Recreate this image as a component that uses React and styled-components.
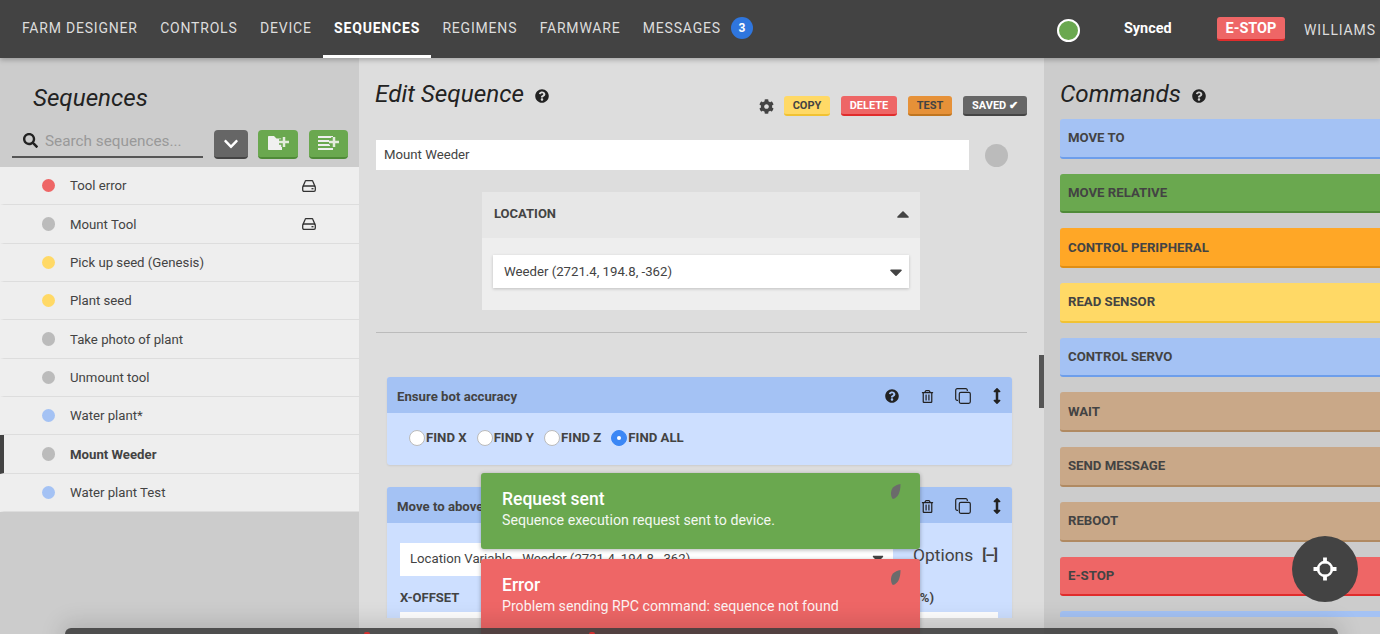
import React from "react";
import styled, { createGlobalStyle } from "styled-components";
import {
  FaSearch, FaChevronDown, FaQuestionCircle, FaRegTrashAlt, FaArrowsAltV, FaCog, FaCaretDown, FaCaretUp,
} from "react-icons/fa";

const Global = createGlobalStyle`
  html, body { margin: 0; padding: 0; width: 1380px; height: 634px; overflow: hidden; background: #ddd; }
  * { box-sizing: border-box; }
  body { font-family: Roboto, "Liberation Sans", sans-serif; color: #434343; }
`;

const Page = styled.div`
  position: relative;
  width: 1380px;
  height: 634px;
  overflow: hidden;
  display: flex;
  flex-direction: column;
`;

const Nav = styled.nav`
  height: 58px;
  flex: none;
  background: #434343;
  display: flex;
  align-items: stretch;
  padding-left: 10.8px;
  box-shadow: 0 2px 5px rgba(0, 0, 0, 0.25);
  position: relative;
  z-index: 2;
`;
const NavLink = styled.a`
  display: flex;
  align-items: center;
  gap: 10px;
  padding: 0 11.2px 0;
  font-size: 14px;
  letter-spacing: 0.8px;
  color: ${(p) => (p.$active ? "#fff" : "#ddd")};
  font-weight: ${(p) => (p.$active ? 700 : 400)};
  border-bottom: 3px solid ${(p) => (p.$active ? "#fff" : "transparent")};
`;
const Badge = styled.span`
  width: 22px;
  height: 22px;
  border-radius: 50%;
  background: #2f76de;
  color: #fff;
  font-size: 12px;
  font-weight: 700;
  letter-spacing: 0;
  display: flex;
  align-items: center;
  justify-content: center;
`;
const NavRight = styled.div`
  margin-left: auto;
  display: flex;
  align-items: center;
  width: 323px;
  flex: none;
`;
const StatusDot = styled.span`
  width: 23px;
  height: 23px;
  border-radius: 50%;
  background: #6aa84f;
  border: 2px solid #fff;
  flex: none;
  margin-top: 2px;
`;
const SyncText = styled.span`
  color: #fff;
  font-size: 14.4px;
  font-weight: 700;
  margin: 0 0 2px 44px;
  width: 93px;
`;
const EStop = styled.button`
  border: 0;
  border-bottom: 2px solid #e02c2c;
  border-radius: 3px;
  width: 68px;
  height: 24px;
  padding: 0;
  background: #ee6666;
  color: #fff;
  font: 700 14.5px Roboto, sans-serif;
`;
const User = styled.span`
  color: #ddd;
  font-size: 14px;
  letter-spacing: 0.87px;
  margin-left: 19px;
  white-space: nowrap;
  margin-top: 2px;
`;

const Columns = styled.div`
  flex: 1;
  min-height: 0;
  display: grid;
  grid-template-columns: 359px 685px 336px;
`;

const LeftCol = styled.aside`
  background: #ccc;
  display: flex;
  flex-direction: column;
`;
const LeftTitle = styled.h3`
  margin: 24px 0 0 33px;
  font: italic 400 24.2px/32px Roboto, sans-serif;
  color: #222;
`;
const SearchRow = styled.div`
  display: flex;
  align-items: flex-start;
  margin: 16px 0 0 12px;
  height: 37px;
`;
const SearchBox = styled.div`
  width: 191px;
  height: 28px;
  border-bottom: 2px solid #555;
  display: flex;
  align-items: center;
  gap: 7px;
  padding: 0 0 5px 11px;
  font-size: 15.3px;
  color: #999;
  margin-right: 11px;
  svg { color: #222; flex: none; }
`;
const IconBtn = styled.button`
  width: ${(p) => p.$w}px;
  height: 29px;
  border: 0;
  border-bottom: 2px solid ${(p) => p.$edge};
  border-radius: 4px;
  background: ${(p) => p.$bg};
  color: #fff;
  padding: 0;
  margin-right: ${(p) => p.$mr ?? 0}px;
  display: flex;
  align-items: center;
  justify-content: center;
`;
const SeqList = styled.ul`
  list-style: none;
  margin: 0;
  padding: 0;
`;
const SeqRow = styled.li`
  height: 38.35px;
  background: #eee;
  border-bottom: 1px solid #ddd;
  border-left: 4px solid ${(p) => (p.$active ? "#434343" : "transparent")};
  display: flex;
  align-items: center;
  padding-left: 37.500px;
  font-size: 13.2px;
  color: #434343;
  font-weight: ${(p) => (p.$active ? 700 : 400)};
`;
const SeqDot = styled.span`
  width: 13.500px;
  height: 13.500px;
  border-radius: 50%;
  background: ${(p) => p.$c};
  margin-right: 15px;
  flex: none;
`;
const SeqIcon = styled.svg`
  margin-left: auto;
  margin-right: 43px;
`;

const MidCol = styled.main`
  background: #ddd;
  position: relative;
`;
const MidScroll = styled.div`
  height: 560px;
  padding: 0 16px;
  overflow: hidden;
`;
const EditHead = styled.div`
  display: flex;
  align-items: flex-start;
  height: 82px;
`;
const MidTitle = styled.h3`
  margin: 20px 0 0 0;
  font: italic 400 24.3px/32px Roboto, sans-serif;
  color: #222;
  display: flex;
  align-items: center;
  gap: 11px;
  svg { margin-top: 4px; }
`;
const Actions = styled.div`
  margin-left: auto;
  margin-top: 38px;
  margin-right: 1px;
  display: flex;
  align-items: center;
  svg { color: #434343; margin-right: 10px; }
`;
const SmallBtn = styled.button`
  height: 20px;
  width: ${(p) => p.$w}px;
  margin-left: ${(p) => p.$ml ?? 0}px;
  border: 0;
  border-bottom: 2px solid ${(p) => p.$edge};
  border-radius: 3px;
  background: ${(p) => p.$bg};
  color: ${(p) => p.$fg};
  padding: 0;
  font: 700 11px Roboto, sans-serif;
`;
const NameRow = styled.div`
  display: flex;
  align-items: center;
  height: 30px;
`;
const NameInput = styled.div`
  width: 593px;
  height: 30px;
  background: #fff;
  padding-left: 8px;
  font-size: 13.2px;
  line-height: 29px;
  color: #434343;
  margin-left: 1px;
`;
const NameDot = styled.span`
  width: 23px;
  height: 23px;
  border-radius: 50%;
  background: #bbb;
  margin-left: 16px;
`;
const LocCard = styled.section`
  width: 438px;
  margin: 22px 0 0 107px;
  background: #eee;
`;
const LocHead = styled.div`
  height: 46px;
  background: #e7e7e7;
  display: flex;
  align-items: center;
  justify-content: space-between;
  padding: 0 7px 3px 12px;
  font-size: 13px;
  font-weight: 700;
  color: #434343;
`;
const LocBody = styled.div`
  height: 72px;
  padding: 17px 11px 0;
`;
const LocSelect = styled.div`
  height: 33px;
  background: #fff;
  box-shadow: 0 1px 3px rgba(0, 0, 0, 0.2);
  display: flex;
  align-items: center;
  justify-content: space-between;
  padding: 0 3px 0 11px;
  font-size: 13.2px;
`;
const Rule = styled.hr`
  margin: 22px 1px 0 1px;
  border: 0;
  border-top: 1px solid #bbb;
`;
const StepCard = styled.section`
  margin: ${(p) => p.$mt}px 16px 0 12px;
  background: #cddfff;
  border-radius: 3px;
  height: ${(p) => p.$h}px;
  box-shadow: 0 1px 2px rgba(0, 0, 0, 0.08);
`;
const StepHead = styled.div`
  height: 36px;
  background: #a4c2f4;
  border-radius: 3px 3px 0 0;
  display: flex;
  align-items: center;
  padding: 2px 7px 0 10px;
  font-size: 13.2px;
  font-weight: 700;
  color: #434343;
`;
const StepIcons = styled.div`
  margin-left: auto;
  display: flex;
  align-items: center;
  gap: 21.500px;
  color: #222;
`;
const MoveIcon = styled(FaArrowsAltV)`
  margin-left: -3.500px;
`;
const RadioRow = styled.div`
  display: flex;
  align-items: center;
  padding: 16px 0 0 22px;
  gap: 10px;
`;
const RadioItem = styled.label`
  display: flex;
  align-items: center;
  font-size: 13.2px;
  font-weight: 700;
  color: #434343;
`;
const Radio = styled.span`
  width: 16px;
  height: 16px;
  border-radius: 50%;
  flex: none;
  margin-right: 1px;
  background: ${(p) => (p.$on ? "#3b87f5" : "#fff")};
  border: 1px solid ${(p) => (p.$on ? "#3b87f5" : "#bbb")};
  display: flex;
  align-items: center;
  justify-content: center;
  margin-top: 1px;
  &::after {
    content: "";
    width: 4px;
    height: 4px;
    border-radius: 50%;
    background: ${(p) => (p.$on ? "#fff" : "transparent")};
  }
`;
const VarRow = styled.div`
  display: flex;
  align-items: flex-start;
  padding: 20px 0 0 13px;
`;
const VarSelect = styled.div`
  width: 493px;
  height: 33px;
  background: #fff;
  display: flex;
  align-items: center;
  padding: 0 0 3px 10px;
  font-size: 13.2px;
  color: #434343;
  white-space: nowrap;
  svg { margin-left: auto; margin-right: 6px; }
`;
const Options = styled.span`
  margin-left: 20px;
  font-size: 17.4px;
  line-height: 24px;
  color: #434343;
  display: flex;
  align-items: center;
  gap: 9px;
  white-space: nowrap;
`;
const OptMark = styled.b`
  font-size: 15px;
  font-weight: 700;
  letter-spacing: -1px;
`;
const FieldLabels = styled.div`
  display: flex;
  justify-content: space-between;
  padding: 14px 78px 0 13px;
  font-size: 13px;
  font-weight: 700;
  color: #434343;
`;
const FieldInput = styled.div`
  height: 30px;
  margin: 7px 0 0 13px;
  width: 598px;
  background: #fff;
`;
const ScrollThumb = styled.span`
  position: absolute;
  right: 0;
  top: 297px;
  width: 5px;
  height: 53px;
  background: #555;
`;

const RightCol = styled.aside`
  background: #ccc;
  padding-left: 16px;
`;
const CmdTitle = styled.h3`
  margin: 20px 0 9px;
  font: italic 400 24.2px/32px Roboto, sans-serif;
  color: #222;
  display: flex;
  align-items: center;
  gap: 11px;
  svg { margin-top: 4px; }
`;
const CmdList = styled.div`
  height: 498px;
  overflow: hidden;
`;
const Cmd = styled.div`
  height: 39.700px;
  margin-bottom: 15px;
  background: ${(p) => p.$bg};
  border-bottom: 2px solid ${(p) => p.$edge};
  border-radius: 3px 0 0 3px;
  padding-left: 8px;
  display: flex;
  align-items: center;
  font-size: 13.2px;
  font-weight: 700;
  color: #434343;
`;

const Toasts = styled.div`
  position: absolute;
  left: 481px;
  top: 473px;
  width: 439px;
  display: flex;
  flex-direction: column;
  gap: 10px;
  z-index: 3;
`;
const Toast = styled.div`
  position: relative;
  height: ${(p) => p.$h}px;
  background: ${(p) => p.$bg};
  border-radius: 3px;
  box-shadow: 0 1px 4px rgba(0, 0, 0, 0.3);
  color: #fff;
  padding: 17px 21px 0;
`;
const ToastTitle = styled.div`
  font-size: 17.500px;
  font-weight: 500;
  line-height: 19px;
`;
const ToastText = styled.div`
  font-size: 14.200px;
  line-height: 20px;
  margin-top: 1px;
  opacity: 0.92;
`;
const Leaf = styled.svg`
  position: absolute;
  right: 19px;
  top: 11px;
`;
const Dock = styled.div`
  position: absolute;
  left: 65px;
  top: 628px;
  width: 1273px;
  height: 20px;
  background: rgba(60, 60, 60, 0.88);
  border-radius: 6px 6px 0 0;
  box-shadow: 0 -2px 22px 4px rgba(0, 0, 0, 0.13);
  z-index: 4;
  display: flex;
  gap: 219px;
  padding: 4px 0 0 299px;
`;
const DockMark = styled.span`
  width: 6px;
  height: 4px;
  border-radius: 2px 2px 0 0;
  background: #d03030;
`;
const Fab = styled.div`
  position: absolute;
  left: 1292px;
  top: 536px;
  width: 66px;
  height: 66px;
  border-radius: 50%;
  background: #434343;
  display: flex;
  align-items: center;
  justify-content: center;
  z-index: 5;
`;

const seqs = [
  ["Tool error", "#ee6666", true],
  ["Mount Tool", "#bbb", true],
  ["Pick up seed (Genesis)", "#ffd966"],
  ["Plant seed", "#ffd966"],
  ["Take photo of plant", "#bbb"],
  ["Unmount tool", "#bbb"],
  ["Water plant*", "#a4c2f4"],
  ["Mount Weeder", "#bbb", false, true],
  ["Water plant Test", "#a4c2f4"],
];

const blue = ["#a4c2f4", "#6d9eeb"];
const tan = ["#c9a888", "#b08a62"];
const cmds = [
  ["MOVE TO", ...blue],
  ["MOVE RELATIVE", "#6aa84f", "#4f8a38"],
  ["CONTROL PERIPHERAL", "#ffa726", "#e08e14"],
  ["READ SENSOR", "#ffd966", "#f1c232"],
  ["CONTROL SERVO", ...blue],
  ["WAIT", ...tan],
  ["SEND MESSAGE", ...tan],
  ["REBOOT", ...tan],
  ["E-STOP", "#ee6666", "#e02c2c"],
  ["", ...blue],
];

const PlusMark = () => (
  <>
    <path d="M16 1v10M11 6h10" stroke="#6aa84f" strokeWidth="5.500" fill="none" />
    <path d="M16 1v10M11 6h10" stroke="#e4ecdd" strokeWidth="2.500" fill="none" />
  </>
);
const FolderPlus = () => (
  <svg width="21" height="15" viewBox="0 0 21 15">
    <path d="M0 1C0 .4.400 0 1 0h5l2.500 2.500H13c.6 0 1 .4 1 1V14H1c-.6 0-1-.4-1-1z" fill="#f0f0f0" />
    <PlusMark />
  </svg>
);
const ListPlus = () => (
  <svg width="21" height="15" viewBox="0 0 21 15" fill="#eee">
    <rect x="0" y="0" width="15" height="2" />
    <rect x="0" y="4" width="12" height="2" />
    <rect x="0" y="8" width="12" height="2" />
    <rect x="0" y="12" width="15" height="2" />
    <PlusMark />
  </svg>
);
const Hdd = () => (
  <SeqIcon width="14" height="12" viewBox="0 0 14 12" fill="none" stroke="#333" strokeWidth="1.300">
    <path d="M1 6.500 3.200 1.200c.1-.3.3-.5.7-.5h6.200c.4 0 .6.200.7.500L13 6.500" />
    <rect x="0.700" y="6" width="12.600" height="5.300" rx="1.300" />
    <path d="M9.500 8.700h2" />
  </SeqIcon>
);
const Clone = () => (
  <svg width="16" height="16" viewBox="0 0 16 16" fill="none" stroke="#222" strokeWidth="1.200">
    <rect x="4.300" y="4.300" width="11" height="11" rx="1.500" />
    <path d="M3 12.300H2.200A1.500 1.500 0 0 1 .7 10.800V2.200A1.500 1.500 0 0 1 2.200.7h8.600a1.500 1.500 0 0 1 1.500 1.500V3" />
  </svg>
);
const Crosshair = () => (
  <svg width="24" height="24" viewBox="0 0 24 24" fill="none" stroke="#fff">
    <circle cx="12" cy="12" r="7" strokeWidth="2.400" />
    <path d="M12 .5v6M12 17.500v6M.5 12h6M17.500 12h6" strokeWidth="3.800" />
  </svg>
);
const LeafIcon = () => (
  <Leaf width="10" height="15" viewBox="0 0 10 15">
    <path d="M9.500 0C3 1 0 4.500 0 9.500c0 2.500.7 4.300 1.800 5.500C7 14 9.500 8 9.500 0z" fill="#6b6b6b" />
  </Leaf>
);

const StepTools = () => (
  <StepIcons>
    <FaQuestionCircle size={14} />
    <FaRegTrashAlt size={13} />
    <Clone />
    <MoveIcon size={16} />
  </StepIcons>
);

export default function App() {
  return (
    <Page>
      <Global />
      <Nav>
        <NavLink>FARM DESIGNER</NavLink>
        <NavLink>CONTROLS</NavLink>
        <NavLink>DEVICE</NavLink>
        <NavLink $active>SEQUENCES</NavLink>
        <NavLink>REGIMENS</NavLink>
        <NavLink>FARMWARE</NavLink>
        <NavLink>MESSAGES<Badge>3</Badge></NavLink>
        <NavRight>
          <StatusDot />
          <SyncText>Synced</SyncText>
          <EStop>E-STOP</EStop>
          <User>WILLIAMS</User>
        </NavRight>
      </Nav>
      <Columns>
        <LeftCol>
          <LeftTitle>Sequences</LeftTitle>
          <SearchRow>
            <SearchBox><FaSearch size={15} />Search sequences...</SearchBox>
            <IconBtn $w={34} $bg="#666" $edge="#444" $mr={10}><FaChevronDown size={16} /></IconBtn>
            <IconBtn $w={40} $bg="#6aa84f" $edge="#4f8a38" $mr={11}><FolderPlus /></IconBtn>
            <IconBtn $w={39} $bg="#6aa84f" $edge="#4f8a38"><ListPlus /></IconBtn>
          </SearchRow>
          <SeqList>
            {seqs.map(([name, c, hdd, active]) => (
              <SeqRow key={name} $active={active}>
                <SeqDot $c={c} />
                {name}
                {hdd && <Hdd />}
              </SeqRow>
            ))}
          </SeqList>
        </LeftCol>
        <MidCol>
          <MidScroll>
            <EditHead>
              <MidTitle>Edit Sequence <FaQuestionCircle size={14} color="#222" /></MidTitle>
              <Actions>
                <FaCog size={15} />
                <SmallBtn $w={46} $bg="#ffd966" $edge="#f1c232" $fg="#434343">COPY</SmallBtn>
                <SmallBtn $w={56} $ml={11} $bg="#ee6666" $edge="#e02c2c" $fg="#fff">DELETE</SmallBtn>
                <SmallBtn $w={44} $ml={11} $bg="#e69138" $edge="#bf7520" $fg="#434343">TEST</SmallBtn>
                <SmallBtn $w={64} $ml={11} $bg="#666" $edge="#444" $fg="#fff">SAVED ✔</SmallBtn>
              </Actions>
            </EditHead>
            <NameRow>
              <NameInput>Mount Weeder</NameInput>
              <NameDot />
            </NameRow>
            <LocCard>
              <LocHead>LOCATION <FaCaretUp size={20} /></LocHead>
              <LocBody>
                <LocSelect>Weeder (2721.4, 194.8, -362)<FaCaretDown size={20} /></LocSelect>
              </LocBody>
            </LocCard>
            <Rule />
            <StepCard $mt={44} $h={88}>
              <StepHead>Ensure bot accuracy<StepTools /></StepHead>
              <RadioRow>
                <RadioItem><Radio />FIND X</RadioItem>
                <RadioItem><Radio />FIND Y</RadioItem>
                <RadioItem><Radio />FIND Z</RadioItem>
                <RadioItem><Radio $on />FIND ALL</RadioItem>
              </RadioRow>
            </StepCard>
            <StepCard $mt={22} $h={180}>
              <StepHead>Move to above<StepTools /></StepHead>
              <VarRow>
                <VarSelect>Location Variable - Weeder (2721.4, 194.8, -362)<FaCaretDown size={18} /></VarSelect>
                <Options>Options <OptMark>[–]</OptMark></Options>
              </VarRow>
              <FieldLabels><span>X-OFFSET</span><span>%)</span></FieldLabels>
              <FieldInput />
            </StepCard>
          </MidScroll>
          <ScrollThumb />
        </MidCol>
        <RightCol>
          <CmdTitle>Commands <FaQuestionCircle size={14} color="#222" /></CmdTitle>
          <CmdList>
            {cmds.map(([t, bg, edge], i) => (
              <Cmd key={i} $bg={bg} $edge={edge}>{t}</Cmd>
            ))}
          </CmdList>
        </RightCol>
      </Columns>
      <Toasts>
        <Toast $bg="#6aa84f" $h={76}>
          <ToastTitle>Request sent</ToastTitle>
          <ToastText>Sequence execution request sent to device.</ToastText>
          <LeafIcon />
        </Toast>
        <Toast $bg="#ee6666" $h={90}>
          <ToastTitle>Error</ToastTitle>
          <ToastText>Problem sending RPC command: sequence not found</ToastText>
          <LeafIcon />
        </Toast>
      </Toasts>
      <Dock><DockMark /><DockMark /></Dock>
      <Fab><Crosshair /></Fab>
    </Page>
  );
}
